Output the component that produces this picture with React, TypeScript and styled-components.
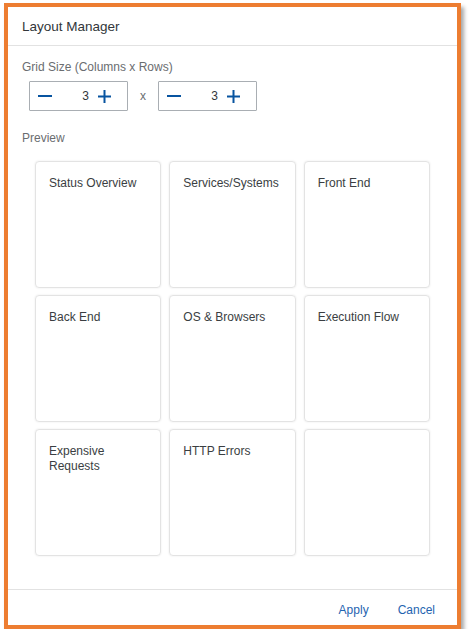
import styled, { createGlobalStyle } from 'styled-components';

const GlobalStyle = createGlobalStyle`
  body {
    margin: 0;
    background: #ffffff;
    font-family: "Liberation Sans", Arial, sans-serif;
  }
`;

const TILES = [
  'Status Overview',
  'Services/Systems',
  'Front End',
  'Back End',
  'OS & Browsers',
  'Execution Flow',
  'Expensive Requests',
  'HTTP Errors',
  '',
];

const MinusIcon = () => (
  <svg width="14" height="14" viewBox="0 0 14 14">
    <path d="M0 7h14" stroke="#0854a0" strokeWidth="2" />
  </svg>
);

const PlusIcon = () => (
  <svg width="13" height="13" viewBox="0 0 13 13">
    <path d="M0 6.5h13M6.5 0v13" stroke="#0854a0" strokeWidth="2" />
  </svg>
);

const Stepper = ({ value }: { value: number }) => (
  <StepBox>
    <StepButton $width={30}>
      <MinusIcon />
    </StepButton>
    <StepValue>{value}</StepValue>
    <StepButton $width={24}>
      <PlusIcon />
    </StepButton>
  </StepBox>
);

const App = () => {
  return (
    <>
      <GlobalStyle />
      <Page>
        <Frame>
          <Header>Layout Manager</Header>
          <Body>
            <Label>Grid Size (Columns x Rows)</Label>
            <StepperRow>
              <Stepper value={3} />
              <Times>x</Times>
              <Stepper value={3} />
            </StepperRow>
            <Label $top={19}>Preview</Label>
            <Grid>
              {TILES.map((t, i) => (
                <Tile key={i}>{t}</Tile>
              ))}
            </Grid>
          </Body>
          <Footer>
            <FooterButton>Apply</FooterButton>
            <FooterButton>Cancel</FooterButton>
          </Footer>
        </Frame>
      </Page>
    </>
  );
};

export default App;

const Page = styled.div`
  padding: 3px 0 0 4px;
`;

const Frame = styled.div`
  width: 457px;
  height: 626px;
  box-sizing: border-box;
  border: 4px solid #ed7d31;
  background: #ffffff;
  box-shadow: 3px 4px 4px rgba(0, 0, 0, 0.35);
  display: flex;
  flex-direction: column;
`;

const Header = styled.div`
  height: 38px;
  flex: none;
  display: flex;
  align-items: center;
  padding-left: 14px;
  border-bottom: 1px solid #e2e2e2;
  font-size: 13.5px;
  color: #32363a;
`;

const Body = styled.div`
  flex: 1;
  padding: 13px 27px 0 14px;
`;

const Label = styled.div<{ $top?: number }>`
  margin-top: ${({ $top }) => $top ?? 0}px;
  font-size: 12px;
  line-height: 16px;
  color: #6a6d70;
`;

const StepperRow = styled.div`
  display: flex;
  align-items: center;
  gap: 12px;
  margin-top: 6px;
  padding-left: 7px;
`;

const StepBox = styled.div`
  width: 99px;
  height: 30px;
  box-sizing: border-box;
  border: 1px solid #a9aeb3;
  border-radius: 1px;
  display: flex;
  align-items: center;
  padding-right: 11px;
`;

const StepButton = styled.div<{ $width: number }>`
  width: ${({ $width }) => $width}px;
  height: 100%;
  display: flex;
  align-items: center;
  justify-content: center;
  flex: none;
`;

const StepValue = styled.div`
  flex: 1;
  text-align: right;
  font-size: 12px;
  color: #32363a;
  padding-right: 3px;
`;

const Times = styled.span`
  font-size: 12px;
  color: #6a6d70;
`;

const Grid = styled.div`
  display: grid;
  grid-template-columns: repeat(3, 1fr);
  grid-auto-rows: 127px;
  gap: 7px 8px;
  margin-top: 15px;
  margin-left: 13px;
`;

const Tile = styled.div`
  box-sizing: border-box;
  border: 1px solid #e3e3e3;
  border-radius: 4px;
  box-shadow: 0 0 2px rgba(0, 0, 0, 0.1);
  padding: 14px 13px;
  font-size: 12px;
  line-height: 15px;
  color: #3a3e42;
`;

const Footer = styled.div`
  height: 36px;
  flex: none;
  box-sizing: border-box;
  border-top: 1px solid #e2e2e2;
  display: flex;
  align-items: center;
  justify-content: flex-end;
  gap: 13px;
  padding: 5px 14px 0 0;
`;

const FooterButton = styled.span`
  padding: 0 8px;
  font-size: 12px;
  color: #1f64b0;
  cursor: pointer;
`;
